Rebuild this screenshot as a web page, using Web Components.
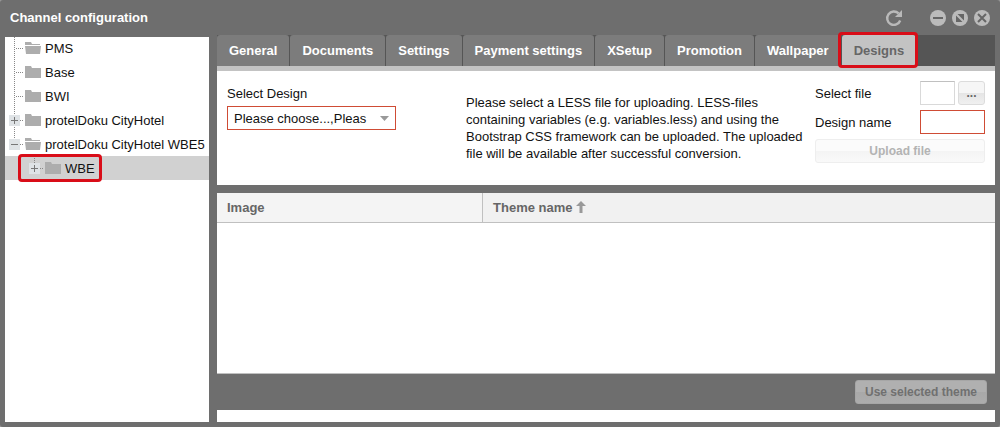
<!DOCTYPE html>
<html lang="en">
<head>
<meta charset="utf-8">
<title>Channel configuration</title>
<style>
body { margin: 0; background: #999; font: 13px/17px "Liberation Sans", Arial, sans-serif; color: #111; }
</style>
</head>
<body>
<channel-window heading="Channel configuration">
  <nav-tree slot="nav">
    <tree-node kind="leaf" open>PMS</tree-node>
    <tree-node kind="leaf">Base</tree-node>
    <tree-node kind="leaf">BWI</tree-node>
    <tree-node kind="plus">protelDoku CityHotel</tree-node>
    <tree-node kind="minus" open>protelDoku CityHotel WBE5</tree-node>
    <tree-node kind="plus" child selected>WBE</tree-node>
  </nav-tree>
  <tab-bar>
    <tab-item>General</tab-item>
    <tab-item>Documents</tab-item>
    <tab-item>Settings</tab-item>
    <tab-item>Payment settings</tab-item>
    <tab-item>XSetup</tab-item>
    <tab-item>Promotion</tab-item>
    <tab-item>Wallpaper</tab-item>
    <tab-item active>Designs</tab-item>
  </tab-bar>
  <design-form>Please select a LESS file for uploading. LESS-files containing variables (e.g. variables.less) and using the Bootstrap CSS framework can be uploaded. The uploaded file will be available after successful conversion.</design-form>
  <theme-table></theme-table>
  <bottom-bar>Use selected theme</bottom-bar>
</channel-window>

<script>
const define = (name, render) => customElements.define(name, class extends HTMLElement {
  connectedCallback() {
    if (!this.shadowRoot) this.attachShadow({ mode: "open" }).innerHTML = render(this);
  }
});

define("channel-window", el => `
<style>
  :host { display: flex; flex-direction: column; box-sizing: border-box; min-height: 100vh; padding: 0 5px 5px; background: #6e6e6e; border-radius: 3px; }
  header { display: flex; align-items: center; height: 35px; padding: 0 4px 0 5px; }
  h1 { flex: 1; margin: 0; font-size: 13px; line-height: 17px; color: #fff; }
  .tools { display: flex; gap: 4px; }
  .tools button { width: 18px; height: 18px; padding: 0; border: 0; background: none; }
  .tools button:first-child { margin-right: 22px; }
  svg { display: block; }
  .body { flex: 1; display: grid; grid-template-columns: 204px minmax(0, 1fr); gap: 8px; }
  main { display: flex; flex-direction: column; }
</style>
<header>
  <h1>${el.getAttribute("heading")}</h1>
  <div class="tools">
    <button type="button" aria-label="Refresh"><svg width="18" height="18" viewBox="0 0 18 18"><path d="M13.6 4.4A6.7 6.7 0 1 0 15.2 11.500" fill="none" stroke="#b9b9b9" stroke-width="2.4"/><path d="M17 1v7h-7z" fill="#b9b9b9"/></svg></button>
    <button type="button" aria-label="Minimize"><svg width="18" height="18" viewBox="0 0 18 18"><circle cx="9" cy="9" r="8" fill="#bbb"/><path d="M4 9h10" stroke="#666" stroke-width="2"/></svg></button>
    <button type="button" aria-label="Maximize"><svg width="18" height="18" viewBox="0 0 18 18"><circle cx="9" cy="9" r="8" fill="#bbb"/><path d="M6.500 5H13v6.500zM5 6.500V13h6.500z" fill="#666"/></svg></button>
    <button type="button" aria-label="Close"><svg width="18" height="18" viewBox="0 0 18 18"><circle cx="9" cy="9" r="8" fill="#bbb"/><path d="M5 5l8 8M13 5l-8 8" stroke="#666" stroke-width="2"/></svg></button>
  </div>
</header>
<div class="body"><slot name="nav"></slot><main><slot></slot></main></div>`);

define("nav-tree", () => `
<style>
  :host { display: block; margin-top: 2px; background: #fff; }
  nav { margin-top: -1px; }
</style>
<nav><slot></slot></nav>`);

define("tree-node", el => {
  const kind = el.getAttribute("kind");
  const child = el.hasAttribute("child");
  const last = kind === "minus" || child;
  const box = kind === "leaf" ? "" : `<path d="M4 7h11v11H4z" fill="#dfe3e6"/><path d="M6 12.5h7${kind === "plus" ? "M9.5 9v7" : ""}" stroke="#777"/>`;
  const folder = el.hasAttribute("open")
    ? `<path d="M0 0h6l1 2h8v1H0zM0 4h16l-1 8H1z" fill="#adadad"/>`
    : `<path d="M0 0h6l1 2h9v10H0z" fill="#adadad"/>`;
  return `
<style>
  :host { display: block; }
  :host([selected]) { background: #d1d1d1; }
  .row { position: relative; display: flex; align-items: center; height: 24px; }
  :host([child]) .row { padding-left: 20px; }
  span { margin-left: 4px; white-space: nowrap; }
  svg { flex: none; }
  .mark { position: absolute; left: 13px; top: -2px; width: 78px; height: 22px; border: 3px solid #d90d18; border-radius: 4px; }
</style>
<div class="row">
  <svg width="20" height="24" viewBox="0 0 20 24"><path d="M9.5 ${child ? 2 : 1}V${last ? 12 : 24}M11 12.5h8" fill="none" stroke="#888" stroke-dasharray="1 1"/>${box}</svg>
  <svg width="16" height="12" viewBox="0 0 16 12">${folder}</svg>
  <span><slot></slot></span>
  ${el.hasAttribute("selected") ? `<i class="mark"></i>` : ""}
</div>`;
});

define("tab-bar", () => `
<style>
  :host { display: flex; gap: 1px; height: 31px; background: #555; border-bottom: 5px solid #c3c3c3; }
</style>
<slot></slot>`);

define("tab-item", el => `
<style>
  :host { display: block; position: relative; }
  button { height: 31px; padding: 0 12px; border: 0; border-radius: 3px 3px 0 0; background: #7c7c7c; color: #fff; font: bold 13px/17px "Liberation Sans", Arial, sans-serif; white-space: nowrap; }
  :host([active]) button { background: #c3c3c3; color: #666; }
  .mark { position: absolute; inset: -3px -2px -2px -4px; border: 3px solid #d90d18; border-radius: 4px; }
</style>
<button type="button"><slot></slot></button>${el.hasAttribute("active") ? `<i class="mark"></i>` : ""}`);

define("design-form", () => `
<style>
  :host { display: block; background: #fff; }
  form { display: grid; grid-template-columns: 239px minmax(0, 1fr) 170px; padding: 10px 10px 22px; }
  input, select, button { box-sizing: border-box; height: 24px; margin: 0; font: inherit; color: inherit; border-radius: 0; }
  .pick label { display: block; margin: 4px 0; }
  .box { position: relative; width: 169px; }
  select { display: block; width: 100%; padding: 0 28px 0 6px; border: 1px solid #cf4c35; background: #fff; appearance: none; }
  .box svg { position: absolute; right: 7px; top: 10px; pointer-events: none; }
  p { margin: 13px 0 0; }
  .upload { display: grid; gap: 5px; }
  .line { display: flex; align-items: center; }
  .line label { flex: 1; }
  input { width: 65px; padding: 0 4px; border: 1px solid #cf4c35; background: #fff; }
  .file { width: 35px; margin-right: 3px; border-color: #c0c0c0 #d9d9d9 #d9d9d9; }
  button { padding: 0; border: 1px solid #dcdcdc; border-radius: 3px; background: linear-gradient(#f6f6f6 50%, #e5e5e5 50%, #f0f0f0); font-weight: bold; font-size: 12px; color: #666; }
  .dots { width: 27px; }
  .send { border-color: #eee; background: linear-gradient(#fbfbfb 50%, #f4f4f4 50%, #f9f9f9); color: #b3b3b3; }
</style>
<form>
  <div class="pick">
    <label for="design">Select Design</label>
    <div class="box">
      <select id="design"><option>Please choose...,Pleas</option></select>
      <svg width="9" height="5" viewBox="0 0 9 5"><path d="M0 0h9L4.5 5z" fill="#999"/></svg>
    </div>
  </div>
  <p><slot></slot></p>
  <div class="upload">
    <div class="line"><label for="file">Select file</label><input id="file" class="file" type="text"><button class="dots" type="button">...</button></div>
    <div class="line"><label for="name">Design name</label><input id="name" type="text"></div>
    <button class="send" type="button" disabled>Upload file</button>
  </div>
</form>`);

define("theme-table", () => `
<style>
  :host { display: block; flex: 1; margin-top: 8px; background: #fff; border-bottom: 1px solid #c0c0c0; }
  table { width: 100%; border-collapse: separate; border-spacing: 0; table-layout: fixed; }
  th { box-sizing: border-box; height: 30px; padding: 0 10px; border-bottom: 1px solid #c0c0c0; background: #f4f4f4; color: #666; text-align: left; }
  th:first-child { width: 34.2%; border-right: 1px solid #c0c0c0; }
  th:last-child { background: #f1f1f1; }
  svg { vertical-align: -1px; }
</style>
<table>
  <thead><tr><th scope="col">Image</th><th scope="col" aria-sort="ascending">Theme name <svg width="10" height="12" viewBox="0 0 10 12"><path d="M5 0l5 5H6.500v7h-3V5H0z" fill="#999"/></svg></th></tr></thead>
  <tbody></tbody>
</table>`);

define("bottom-bar", () => `
<style>
  :host { display: flex; justify-content: flex-end; padding: 6px 8px; border-bottom: 12px solid #fff; }
  button { box-sizing: border-box; width: 132px; height: 24px; padding: 0; border: 1px solid #a6a6a6; border-radius: 3px; background: linear-gradient(#b0b0b0 50%, #a8a8a8 50%, #adadad); color: #707070; font: bold 12px/17px "Liberation Sans", Arial, sans-serif; white-space: nowrap; }
</style>
<button type="button" disabled><slot></slot></button>`);
</script>
</body>
</html>
